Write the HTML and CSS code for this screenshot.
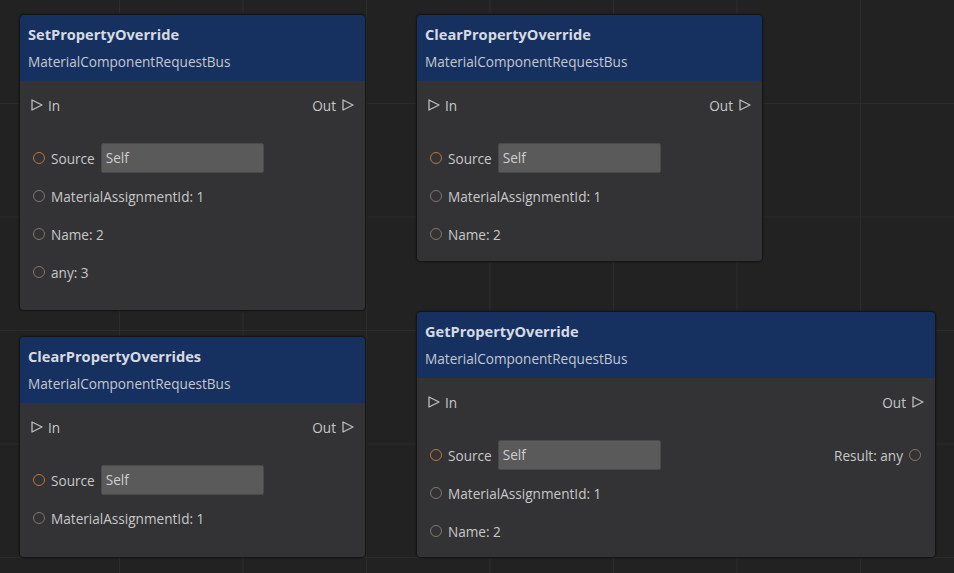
FILE: index.html
```html
<!DOCTYPE html>
<html lang="en">
<head>
    <meta charset="UTF-8">
    <meta name="viewport" content="width=device-width, initial-scale=1.0">
    <link rel="stylesheet" href="styles.css">
    <title>Script Canvas</title>
</head>
<body>
    <div id="canvas">
        <!-- set -->
        <div class="node node-set">
            <div class="head">
                <p class="title">SetPropertyOverride</p>
                <p class="bus">MaterialComponentRequestBus</p>
            </div>
            <div class="body">
                <div class="row exec">
                    <span class="slot"><svg class="tri" viewBox="0 0 12 12"><polygon points="1,1 11,6 1,11"/></svg>In</span>
                    <span class="slot">Out<svg class="tri" viewBox="0 0 12 12"><polygon points="1,1 11,6 1,11"/></svg></span>
                </div>
                <div class="row first">
                    <span class="slot"><i class="pin entity"></i>Source<span class="field">Self</span></span>
                </div>
                <div class="row"><span class="slot"><i class="pin"></i>MaterialAssignmentId: 1</span></div>
                <div class="row"><span class="slot"><i class="pin"></i>Name: 2</span></div>
                <div class="row"><span class="slot"><i class="pin"></i>any: 3</span></div>
            </div>
        </div>

        <!-- clear one -->
        <div class="node node-clear">
            <div class="head">
                <p class="title">ClearPropertyOverride</p>
                <p class="bus">MaterialComponentRequestBus</p>
            </div>
            <div class="body">
                <div class="row exec">
                    <span class="slot"><svg class="tri" viewBox="0 0 12 12"><polygon points="1,1 11,6 1,11"/></svg>In</span>
                    <span class="slot">Out<svg class="tri" viewBox="0 0 12 12"><polygon points="1,1 11,6 1,11"/></svg></span>
                </div>
                <div class="row first">
                    <span class="slot"><i class="pin entity"></i>Source<span class="field">Self</span></span>
                </div>
                <div class="row"><span class="slot"><i class="pin"></i>MaterialAssignmentId: 1</span></div>
                <div class="row"><span class="slot"><i class="pin"></i>Name: 2</span></div>
            </div>
        </div>

        <!-- clear all -->
        <div class="node node-clearall">
            <div class="head">
                <p class="title">ClearPropertyOverrides</p>
                <p class="bus">MaterialComponentRequestBus</p>
            </div>
            <div class="body">
                <div class="row exec">
                    <span class="slot"><svg class="tri" viewBox="0 0 12 12"><polygon points="1,1 11,6 1,11"/></svg>In</span>
                    <span class="slot">Out<svg class="tri" viewBox="0 0 12 12"><polygon points="1,1 11,6 1,11"/></svg></span>
                </div>
                <div class="row first">
                    <span class="slot"><i class="pin entity"></i>Source<span class="field">Self</span></span>
                </div>
                <div class="row"><span class="slot"><i class="pin"></i>MaterialAssignmentId: 1</span></div>
            </div>
        </div>

        <!-- get -->
        <div class="node node-get">
            <div class="head">
                <p class="title">GetPropertyOverride</p>
                <p class="bus">MaterialComponentRequestBus</p>
            </div>
            <div class="body">
                <div class="row exec">
                    <span class="slot"><svg class="tri" viewBox="0 0 12 12"><polygon points="1,1 11,6 1,11"/></svg>In</span>
                    <span class="slot">Out<svg class="tri" viewBox="0 0 12 12"><polygon points="1,1 11,6 1,11"/></svg></span>
                </div>
                <div class="row first">
                    <span class="slot"><i class="pin entity"></i>Source<span class="field">Self</span></span>
                    <span class="slot out">Result: any<i class="pin"></i></span>
                </div>
                <div class="row"><span class="slot"><i class="pin"></i>MaterialAssignmentId: 1</span></div>
                <div class="row"><span class="slot"><i class="pin"></i>Name: 2</span></div>
            </div>
        </div>
    </div>
</body>
</html>
```

FILE: styles.css
```css
body,p{padding:0;margin:0}
body{
    background:#222;
    font-family: "Open Sans", "Noto Sans", sans-serif;
    color:#c8c8c8;
    overflow:hidden;
}
#canvas{
    position:relative;
    width:954px;
    height:573px;
    background-color:#222;
    background-image:
        linear-gradient(90deg, #2c2c29 1px, transparent 1px),
        linear-gradient(#2a2a27 1px, transparent 1px);
    background-size:123.5px 113.5px;
    background-position:-4.5px -10.5px;
}

/* nodes sit on the canvas at their graph position */
.node{
    position:absolute;
    display:flex;
    flex-direction:column;
    border:1px solid #151515;
    border-radius:5px;
    overflow:hidden;
    box-shadow:0 0 2px rgba(0,0,0,.5);
}
.node-set{left:19px;top:14px;width:345px;height:295px}
.node-clear{left:416px;top:14px;width:345px;height:246px}
.node-clearall{left:19px;top:336px;width:345px;height:220px}
.node-get{left:416px;top:311px;width:518px;height:245px}

.head{
    height:66px;
    flex:none;
    box-sizing:border-box;
    padding:9px 8px 0;
    background:#16315f;
}
.title{
    font-size:14.6px;
    font-weight:bold;
    line-height:20px;
    color:#d6dae2;
}
.bus{
    margin-top:8px;
    font-size:13.6px;
    line-height:20px;
    color:#c3c8d2;
}
.body{
    flex:1;
    background:rgba(52,52,54,.94);
    padding-top:5px;
}
.row{
    height:38px;
    display:flex;
    align-items:center;
    justify-content:space-between;
    padding:0 11px 0 13px;
    font-size:13.6px;
}
.row.first{margin-top:15px;padding-right:14px}
.row.exec{padding-left:11px}
.slot{
    display:flex;
    align-items:center;
}
.tri{
    width:12px;
    height:12px;
    fill:none;
    stroke:#bdbdbd;
    stroke-width:1.3;
    stroke-linejoin:round;
}
.exec .slot:first-child .tri{margin-right:5px}
.exec .slot:last-child .tri{margin-left:6px}
.pin{
    width:10px;
    height:10px;
    border:1.6px solid #82766a;
    border-radius:50%;
    margin-right:6px;
}
.pin.entity{border-color:#b8763e}
.out .pin{margin:0 0 0 6px}
.field{
    margin-left:6px;
    width:163px;
    height:30px;
    box-sizing:border-box;
    padding-left:4px;
    line-height:28px;
    background:#5a5a5a;
    border:1px solid #4a4a4a;
    border-radius:2px;
    color:#cfcfcf;
}
```
